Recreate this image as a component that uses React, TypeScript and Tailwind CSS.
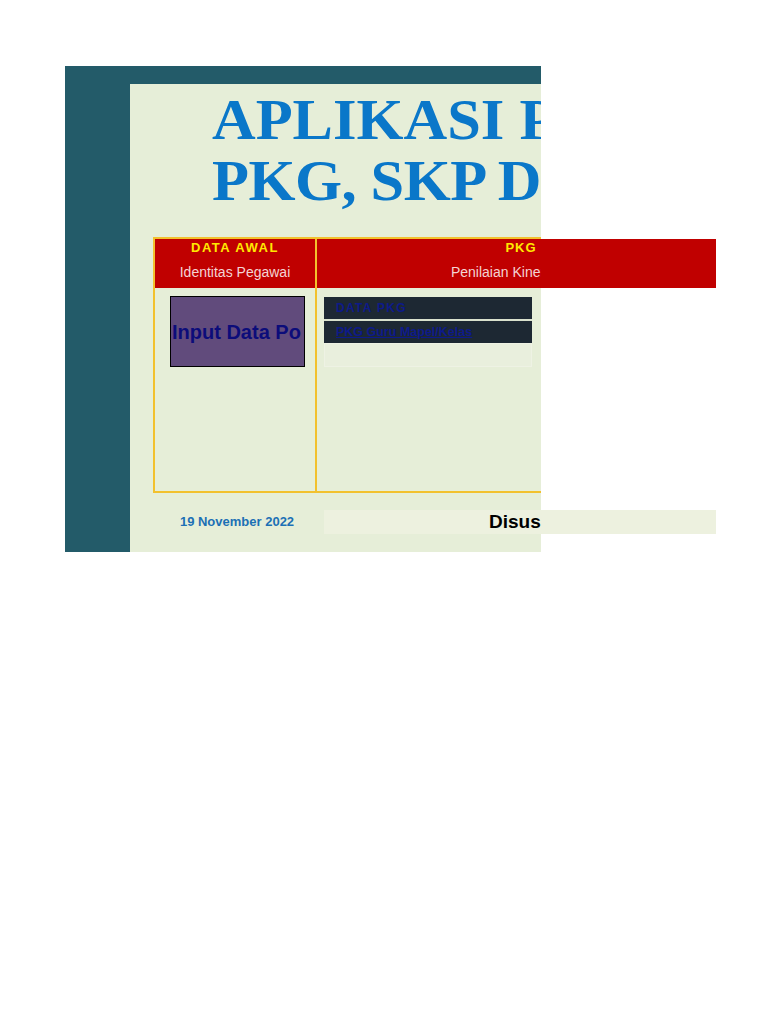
import React from "react";

const sans = { fontFamily: '"Liberation Sans", Arial, sans-serif' };

const App = () => {
  return (
    <div className="min-h-screen bg-white pt-[66px] pl-[65px]" style={sans}>
      {/* teal frame, page is cut at x=541 */}
      <div className="w-[476px] h-[486px] bg-[#235b69] pt-[18px] pl-[65px]">
        <div className="h-[468px] bg-[#e6eed8]">
          <div className="overflow-hidden pl-[82px] pt-[6px]">
            <div
              className="whitespace-nowrap origin-left scale-x-[1.08] text-[56px] leading-[61px] font-bold text-[#0a77c9]"
              style={{ fontFamily: '"Liberation Serif", "Times New Roman", serif' }}
            >
              <div>APLIKASI PENILAIAN</div>
              <div className="tracking-[-0.5px]">PKG, SKP DAN PAK</div>
            </div>
          </div>

          {/* menu table */}
          <div className="ml-[23px] mt-[25px] w-[388px] h-[256px] border-2 border-r-0 border-[#f2c12e]">
            <div className="flex h-[49px] w-[561px] bg-[#c00000]">
              <div className="w-[162px] shrink-0 border-r-2 border-[#f2c12e] flex flex-col items-center pt-[1px]">
                <span className="text-[13px] leading-[16px] font-bold tracking-[1.5px] text-[#ffe800]">
                  DATA AWAL
                </span>
                <span className="mt-[8px] text-[14px] leading-[16px] text-[#f4d4d4]">
                  Identitas Pegawai
                </span>
              </div>
              <div className="w-[224px] shrink-0 overflow-hidden">
                <div className="w-[399px] flex flex-col items-center pt-[1px] pl-[9px] whitespace-nowrap">
                  <span className="text-[13px] leading-[16px] font-bold tracking-[1px] text-[#ffe800]">
                    PKG
                  </span>
                  <span className="mt-[8px] text-[14px] leading-[16px] text-[#f4d4d4]">
                    Penilaian Kinerja Guru
                  </span>
                </div>
              </div>
            </div>
            <div className="flex h-[203px]">
              <div className="w-[162px] shrink-0 border-r-2 border-[#f2c12e] pt-[8px] pl-[15px]">
                <div className="w-[135px] h-[71px] bg-[#614b7c] border border-black flex items-center">
                  <div className="w-[131px] overflow-hidden pl-[1px]">
                    <span className="whitespace-nowrap text-[20px] font-bold text-[#0c0c7a]">
                      Input Data Pokok
                    </span>
                  </div>
                </div>
              </div>
              <div className="shrink-0 pl-[7px] pt-[9px]">
                <div className="w-[208px] h-[22px] bg-[#1d2833] flex items-center pl-[12px]">
                  <span className="text-[12px] font-bold tracking-[1.3px] text-[#0d1a8a]">DATA PKG</span>
                </div>
                <div className="w-[208px] h-[2px] bg-[#d9e1cd]" />
                <div className="w-[208px] h-[22px] bg-[#1d2833] flex items-center pl-[12px]">
                  <span className="text-[12.5px] font-bold underline text-[#0d1a8a]">PKG Guru Mapel/Kelas</span>
                </div>
                <div className="w-[208px] h-[24px] bg-[#e9efdd] border border-[#eef2e4]" />
              </div>
            </div>
          </div>

          {/* footer */}
          <div className="ml-[23px] flex pt-[17px]">
            <div className="w-[162px] shrink-0 h-[24px] flex items-center justify-center pl-[6px]">
              <span className="whitespace-nowrap text-[13px] font-bold text-[#1c70b5]">19 November 2022</span>
            </div>
            <div className="ml-[9px] w-[392px] shrink-0 h-[24px] bg-[#edf1df]">
              <div className="w-[217px] h-[24px] overflow-hidden flex items-center pl-[165px]">
                <span className="whitespace-nowrap text-[19px] font-bold text-black">Disusun oleh</span>
              </div>
            </div>
          </div>
        </div>
      </div>
    </div>
  );
};

export default App;
